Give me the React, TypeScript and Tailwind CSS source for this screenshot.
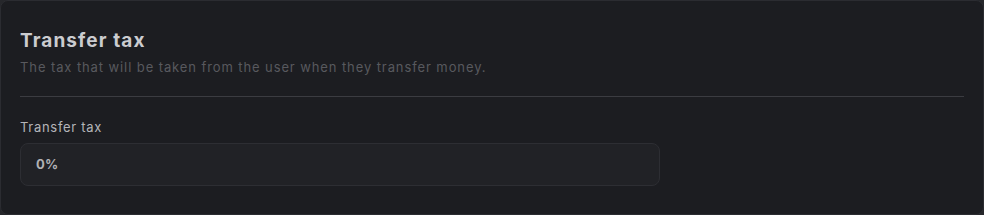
export default function App() {
  return (
    <div className="w-[984px] h-[215px] bg-[#26272b] font-['Inter',sans-serif]">
      <div className="h-[215px] rounded-lg border border-[#2b2c31] bg-[#1c1d21] px-[19px] pt-[26px]">
        <h2 className="text-[19px] leading-[28px] font-bold tracking-[1.1px] text-[#cbccd0]">Transfer tax</h2>
        <p className="mt-[2px] text-[13px] leading-[20px] tracking-[0.9px] text-[#58595e]">
          The tax that will be taken from the user when they transfer money.
        </p>
        <div className="mt-[19px] h-px bg-[#3b3c41]" />
        <label className="mt-[20px] block text-[13px] leading-[20px] tracking-[0.7px] text-[#b4b5b9]">
          Transfer tax
        </label>
        <div className="mt-[6px] flex h-[43px] w-[640px] items-center rounded-lg border border-[#2d2e33] bg-[#212226] px-[15px]">
          <span className="text-[13px] font-bold tracking-[0.3px] text-[#b0b1b5]">0%</span>
        </div>
      </div>
    </div>
  );
}
